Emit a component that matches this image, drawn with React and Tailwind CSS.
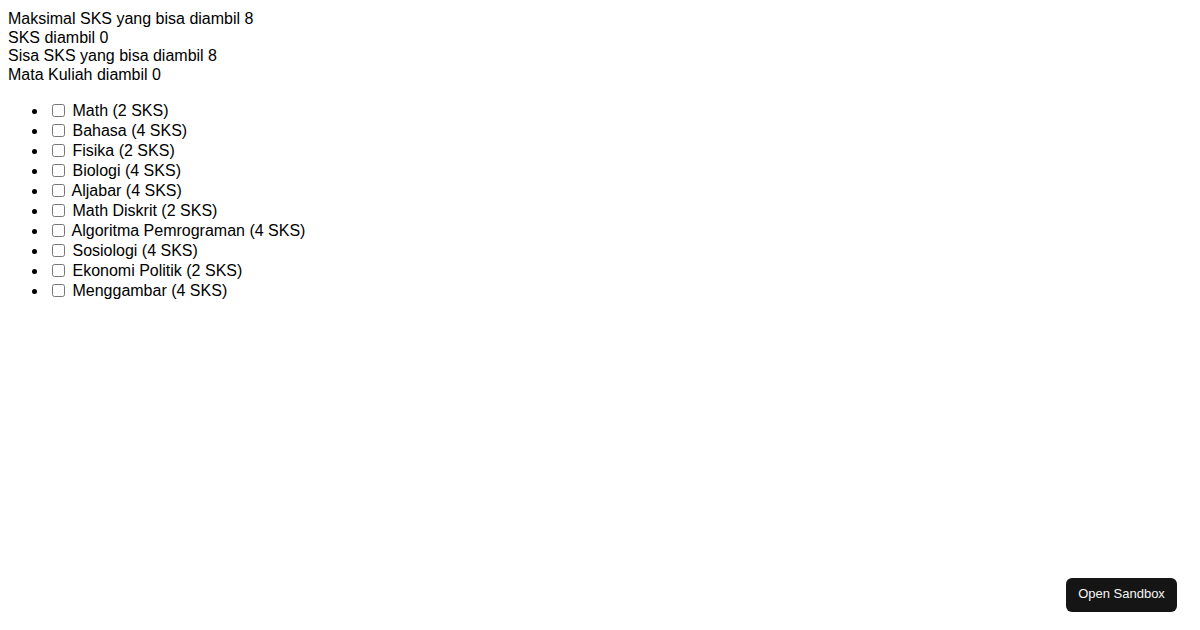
import React, { useState } from 'react';

const COURSES = [
    { name: 'Math', sks: 2 },
    { name: 'Bahasa', sks: 4 },
    { name: 'Fisika', sks: 2 },
    { name: 'Biologi', sks: 4 },
    { name: 'Aljabar', sks: 4 },
    { name: 'Math Diskrit', sks: 2 },
    { name: 'Algoritma Pemrograman', sks: 4 },
    { name: 'Sosiologi', sks: 4 },
    { name: 'Ekonomi Politik', sks: 2 },
    { name: 'Menggambar', sks: 4 },
];

const MAX_SKS = 8;

export default function App() {
    const [selected, setSelected] = useState([]);

    const taken = selected.reduce((sum, i) => sum + COURSES[i].sks, 0);

    const toggle = (i) => {
        setSelected(prev => {
            if (prev.includes(i)) return prev.filter(x => x !== i);
            // don't go over the limit
            if (taken + COURSES[i].sks > MAX_SKS) return prev;
            return [...prev, i];
        });
    };

    return (
        <div className="min-h-screen bg-white px-2 pt-[10px] pb-2 text-black text-base font-['Liberation_Sans',Arial,sans-serif]">
            <div className="leading-[18.67px]">
                <div>Maksimal SKS yang bisa diambil {MAX_SKS}</div>
                <div>SKS diambil {taken}</div>
                <div>Sisa SKS yang bisa diambil {MAX_SKS - taken}</div>
                <div>Mata Kuliah diambil {selected.length}</div>
            </div>

            <ul className="mt-4 list-disc pl-10 leading-[20px]">
                {COURSES.map((course, i) => (
                    <li key={course.name} className="h-5">
                        <input
                            type="checkbox"
                            checked={selected.includes(i)}
                            onChange={() => toggle(i)}
                            className="my-0 ml-[4px] mr-[3px] h-[13px] w-[13px] align-[-1px]"
                        />{' '}
                        {course.name} ({course.sks} SKS)
                    </li>
                ))}
            </ul>

            <button className="fixed bottom-[18px] right-[23px] h-[34px] w-[111px] rounded-md bg-[#151515] pb-[2px] text-[13px] text-[#f5f5f5] font-['Liberation_Sans',Arial,sans-serif]">
                Open Sandbox
            </button>
        </div>
    );
}
